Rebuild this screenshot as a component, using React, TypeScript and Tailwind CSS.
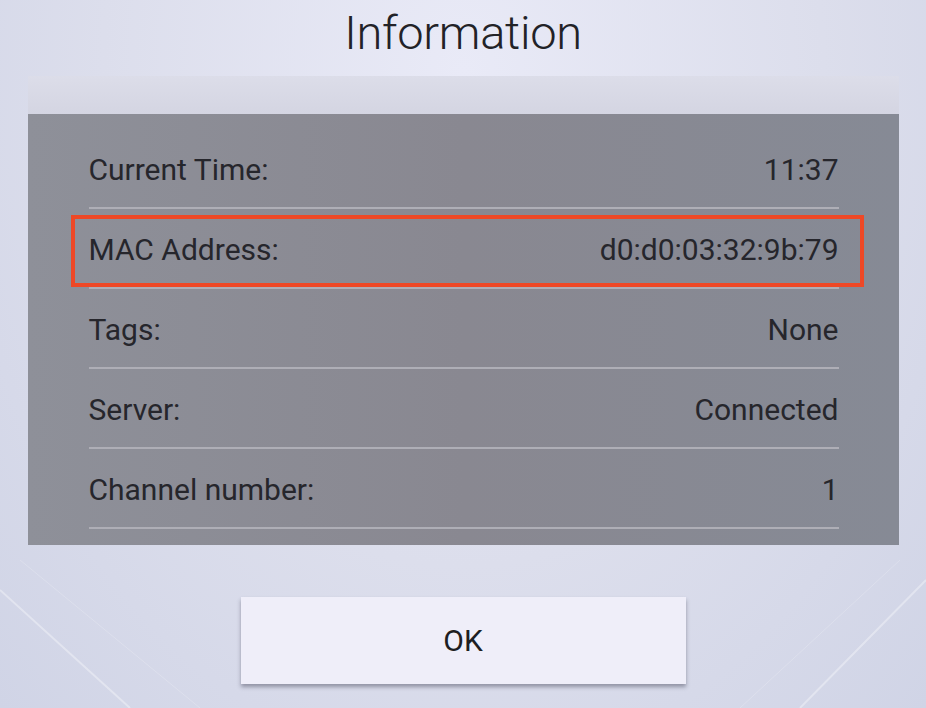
const rows = [
  { label: "Current Time:", value: "11:37" },
  { label: "MAC Address:", value: "d0:d0:03:32:9b:79", marked: true },
  { label: "Tags:", value: "None" },
  { label: "Server:", value: "Connected" },
  { label: "Channel number:", value: "1" },
];

export default function App() {
  return (
    <div className="relative w-[926px] h-[708px] overflow-hidden bg-[radial-gradient(ellipse_at_50%_10%,#e9eaf7_0%,#dcdeec_55%,#d0d4e6_100%)] font-['Roboto',sans-serif] text-[#26262c]">
      {/* faint decorative streaks in the lower corners */}
      <svg className="absolute inset-0 pointer-events-none" width="926" height="708">
        <line x1="0" y1="590" x2="130" y2="708" stroke="#ffffff" strokeOpacity="0.35" strokeWidth="2" />
        <line x1="20" y1="560" x2="200" y2="708" stroke="#ffffff" strokeOpacity="0.2" strokeWidth="1" />
        <line x1="926" y1="580" x2="800" y2="708" stroke="#ffffff" strokeOpacity="0.35" strokeWidth="2" />
        <line x1="900" y1="560" x2="740" y2="708" stroke="#ffffff" strokeOpacity="0.2" strokeWidth="1" />
      </svg>

      <div className="relative flex flex-col items-center">
        <h1 className="h-[76px] flex items-center justify-center text-[47px] font-light leading-none tracking-[-0.3px] text-[#222227] pb-[11px]">
          Information
        </h1>

        <div className="w-[871px] h-[38px] bg-[linear-gradient(to_bottom,#dcdde9,#d4d5e2)]" />

        <div className="w-[871px] h-[431px] bg-[linear-gradient(to_right,#8e9099,#898891_50%,#868a95)] pt-[15px] pl-[61px] pr-[60px]">
          {rows.map((row) => (
            <div
              key={row.label}
              className="relative h-[80px] flex items-center justify-between border-b-2 border-[#aeaeb6] text-[30px] pt-[3px]"
            >
              <span>{row.label}</span>
              <span>{row.value}</span>
              {row.marked && (
                <div className="absolute -left-[18px] -right-[25px] top-[6px] bottom-0 border-[4px] border-[#ee4826]" />
              )}
            </div>
          ))}
        </div>

        <button className="mt-[52px] w-[445px] h-[87px] bg-[#efeef9] text-[30px] text-[#1e1e22] shadow-[0_3px_4px_rgba(60,60,80,0.45)] flex items-center justify-center">
          OK
        </button>
      </div>
    </div>
  );
}
